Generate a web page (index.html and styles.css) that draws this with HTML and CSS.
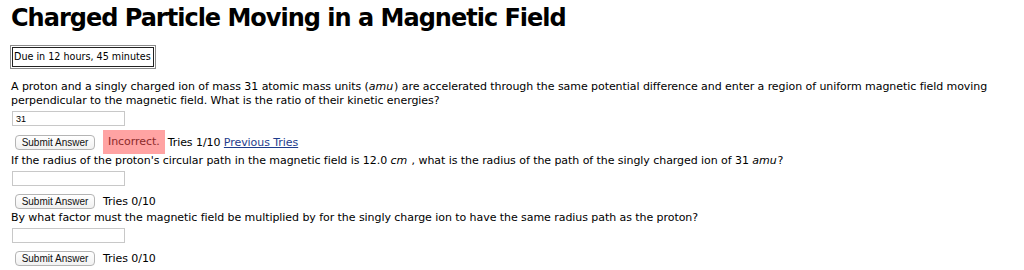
FILE: index.html
```html
<!DOCTYPE html>
<html lang="en">
<head>
    <meta charset="UTF-8">
    <title>Charged Particle Moving in a Magnetic Field</title>
    <link rel="stylesheet" href="styles.css">
</head>
<body>
    <h1 class="title">Charged Particle Moving in a Magnetic Field</h1>

    <div class="due"><span class="due-inner">Due in 12 hours, 45 minutes</span></div>

    <div class="part first">
        <p class="question">A proton and a singly charged ion of mass 31 atomic mass units (<i>amu</i>) are accelerated through the same potential difference and enter a region of uniform magnetic field moving perpendicular to the magnetic field. What is the ratio of their kinetic energies?</p>
        <input type="text" class="answer" value="31">
        <div class="submit-row graded">
            <button class="submit">Submit Answer</button>
            <span class="status wrong">Incorrect.</span>
            <span class="tries">Tries 1/10 <a href="#" class="prev">Previous Tries</a></span>
        </div>
    </div>

    <div class="part">
        <p class="question">If the radius of the proton's circular path in the magnetic field is 12.0 <i>cm</i> , what is the radius of the path of the singly charged ion of 31 <i>amu</i>?</p>
        <input type="text" class="answer">
        <div class="submit-row">
            <button class="submit">Submit Answer</button>
            <span class="tries">Tries 0/10</span>
        </div>
    </div>

    <div class="part">
        <p class="question">By what factor must the magnetic field be multiplied by for the singly charge ion to have the same radius path as the proton?</p>
        <input type="text" class="answer">
        <div class="submit-row">
            <button class="submit">Submit Answer</button>
            <span class="tries">Tries 0/10</span>
        </div>
    </div>
</body>
</html>
```

FILE: styles.css
```css
* { box-sizing: border-box }
body {
    margin: 0;
    padding: 0 11px;
    font-family: "DejaVu Sans", Verdana, sans-serif;
    font-size: 11px;
    letter-spacing: -0.06px;
    color: #000;
    background: #fff;
}
i { padding-right: 1px }
.title {
    margin: 0;
    padding-top: 4px;
    height: 38px;
    font-size: 24px;
    line-height: 28px;
    font-weight: bold;
    letter-spacing: -1px;
}
.due {
    display: inline-block;
    margin-top: 7px;
    margin-left: -1px;
    padding: 1px;
    border: 1px solid #8a8a8a;
}
.due-inner {
    display: block;
    height: 20px;
    padding: 0 2px 0 1px;
    border: 1px solid #222;
    font-size: 9.6px;
    letter-spacing: 0;
    line-height: 18px;
}
.part { width: 100% }
.question {
    margin: 0;
    line-height: 14px;
}
.first .question { margin-top: 11px }
.answer {
    display: block;
    margin: 3px 0 0 1px;
    width: 113px;
    height: 15px;
    padding: 0 3px;
    border: 1px solid #c8c8c8;
    font-family: "Liberation Sans", Arial, sans-serif;
    font-size: 9px;
}
.submit-row {
    display: flex;
    align-items: center;
    height: 20px;
    margin-top: 5px;
}
.submit-row.graded {
    height: 24px;
    margin-top: 4px;
}
.submit {
    margin: 0 8px 0 4px;
    width: 80px;
    height: 15px;
    padding: 0;
    border: 1px solid #b4b4b4;
    border-radius: 4px;
    background: linear-gradient(#fff, #f1f1f1);
    font-family: "Liberation Sans", Arial, sans-serif;
    font-size: 10px;
    letter-spacing: 0;
    color: #111;
}
.status { height: 24px; line-height: 24px }
.wrong {
    padding: 0 5px;
    margin-right: 3px;
    background: #ffa3a3;
    color: #8c2a2a;
}
.prev { color: #1e3c8c }
```
